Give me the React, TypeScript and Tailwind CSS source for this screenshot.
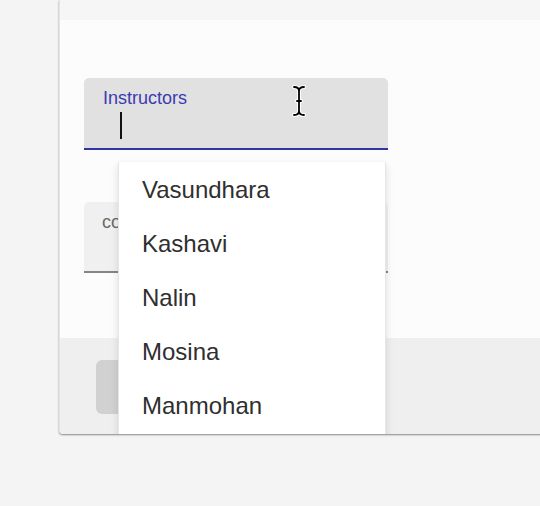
const names = ['Vasundhara', 'Kashavi', 'Nalin', 'Mosina', 'Manmohan'];

const font = { fontFamily: '"Liberation Sans", Arial, Helvetica, sans-serif' };

const IBeam = () => (
  <svg width="14" height="32" viewBox="0 0 14 32" className="absolute left-[292px] top-[85px]">
    <g fill="none" strokeLinecap="round">
      <path d="M2 2 Q7 2 7 6 Q7 2 12 2 M7 6 V26 M2 30 Q7 30 7 26 Q7 30 12 30 M5 16 H9" stroke="#fff" strokeWidth="4" />
      <path d="M2 2 Q7 2 7 6 Q7 2 12 2 M7 6 V26 M2 30 Q7 30 7 26 Q7 30 12 30 M5 16 H9" stroke="#000" strokeWidth="1.8" />
    </g>
  </svg>
);

export default function App() {
  return (
    <div className="relative h-[506px] w-[540px] overflow-hidden bg-[#f4f4f4]" style={font}>
      <div className="relative ml-[59px] flex h-[434px] w-[520px] flex-col overflow-hidden rounded-bl-[4px] border-l border-[#e4e4e4] bg-[#fcfcfc] shadow-[0_1px_2px_rgba(0,0,0,0.45)]">
        <div className="h-[20px] bg-[#f6f6f6]" />

        <div className="flex flex-1 flex-col gap-[52px] px-[24px] pt-[58px]">
          {/* focused field */}
          <div className="relative h-[72px] w-[304px] rounded-t-[5px] border-b-2 border-[#3134a3] bg-[#e1e1e1]">
            <div className="ml-[19px] mt-[11px] text-[18px] leading-none text-[#3b3bb0]">Instructors</div>
            <span className="absolute left-[36px] top-[34px] h-[27px] w-[2px] bg-[#111]" />
          </div>

          {/* idle field */}
          <div className="h-[71px] w-[304px] rounded-t-[5px] border-b-2 border-[#858585] bg-[#f0f0f0]">
            <div className="ml-[18px] mt-[11px] text-[18px] leading-none text-[#6a6a6a]">course</div>
          </div>
        </div>

        <div className="h-[96px] bg-[#efefef] pl-[36px] pt-[22px]">
          <div className="h-[54px] w-[150px] rounded-[6px] bg-[#d1d1d1]" />
        </div>

        {/* dropdown */}
        <div className="absolute left-[58px] top-[162px] h-[300px] w-[268px] border-x border-[#e6e6e6] bg-white shadow-[0_3px_8px_rgba(0,0,0,0.12)]">
          {names.map((n) => (
            <div key={n} className="flex h-[54px] items-center pl-[23px] pt-[2px] text-[24px] leading-none text-[#2f2f2f]">
              {n}
            </div>
          ))}
        </div>
      </div>

      <IBeam />
    </div>
  );
}
